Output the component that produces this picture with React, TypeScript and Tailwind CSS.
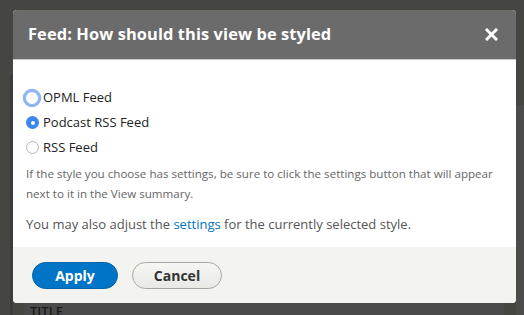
import React from "react";

export default function App() {
  const font = { fontFamily: '"Open Sans", "DejaVu Sans", sans-serif' };
  return (
    <div className="relative w-[524px] h-[315px] overflow-hidden bg-[#454542]" style={font}>
      {/* background page hints */}
      <div className="absolute left-[10px] top-[75px] w-[3px] h-[240px] bg-[#3c3c3a]" />
      <div className="absolute left-[24px] top-[303px] w-[480px] h-[12px] bg-[#4a4a4a]" />
      <div className="absolute left-[30px] top-[303px] text-[13px] font-semibold text-[#1a1a1a] leading-none pt-[2px]">TITLE</div>
      <div className="absolute left-[516px] top-[105px] w-[8px] h-[210px] bg-[#4b4b4b]" />

      {/* dialog */}
      <div className="absolute left-[13px] top-[10px] w-[503px] h-[293px] rounded-[4px] overflow-hidden flex flex-col bg-white">
        <div className="h-[50px] bg-[#6b6b6b] flex items-center justify-between pl-[15px] pr-[18px] border-b border-[#c8c8c8]">
          <span className="text-white text-[16.4px] font-bold tracking-[0.1px]">Feed: How should this view be styled</span>
          <svg width="13" height="13" viewBox="0 0 13 13">
            <path d="M2 2 L11 11 M11 2 L2 11" stroke="white" strokeWidth="3" strokeLinecap="square" />
          </svg>
        </div>
        <div className="flex-1 px-[13px] pt-[26px] flex flex-col">
          <label className="flex items-center h-[24px] text-[13px] text-[#222]">
            <span className="w-[18px] h-[18px] rounded-full border-[3px] border-[#8fb6f0] bg-white mr-[2px] -ml-[3px] shadow-[0_0_1px_#6fa0e8]" />
            OPML Feed
          </label>
          <label className="flex items-center h-[25px] text-[13px] text-[#222]">
            <span className="w-[13px] h-[13px] rounded-full bg-[#3b87f0] flex items-center justify-center mr-[4px]">
              <span className="w-[4px] h-[4px] rounded-full bg-white" />
            </span>
            Podcast RSS Feed
          </label>
          <label className="flex items-center h-[25px] text-[13px] text-[#222]">
            <span className="w-[13px] h-[13px] rounded-full border border-[#b8b8b8] bg-white mr-[4px]" />
            RSS Feed
          </label>
          <p className="text-[11.6px] leading-[20px] text-[#666] mt-[4px]">
            If the style you choose has settings, be sure to click the settings button that will appear next to it in the View summary.
          </p>
          <p className="text-[13px] text-[#555] mt-[11px]">
            You may also adjust the <span className="text-[#0074bd]">settings</span> for the currently selected style.
          </p>
        </div>
        <div className="h-[56px] bg-[#f3f3f0] flex items-center gap-[14px] px-[19px]">
          <button className="w-[86px] h-[27px] rounded-full bg-[#0074c6] border border-[#0062a8] text-white text-[14px] font-bold">Apply</button>
          <button className="w-[90px] h-[27px] rounded-full bg-gradient-to-b from-[#f6f6f3] to-[#e8e8e4] border border-[#a6a6a6] text-[#333] text-[14px] font-bold">Cancel</button>
        </div>
      </div>
    </div>
  );
}
